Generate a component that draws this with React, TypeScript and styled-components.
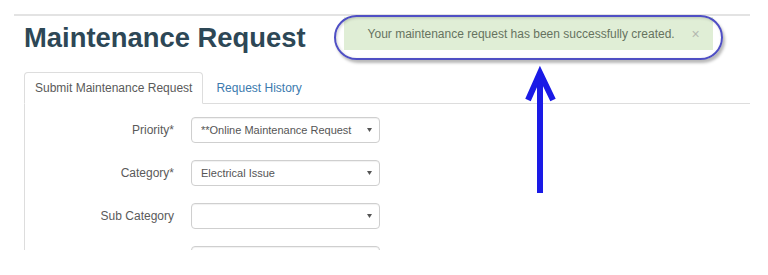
import styled, { createGlobalStyle } from "styled-components";

const GlobalStyle = createGlobalStyle`
  html, body {
    margin: 0;
    padding: 0;
    background: #ffffff;
  }
  body {
    font-family: "Liberation Sans", Arial, sans-serif;
  }
`;

const Page = styled.div`
  box-sizing: border-box;
  width: 768px;
  height: 275px;
  padding: 14px 18px 0 14px;
  background: #ffffff;
  overflow: hidden;
`;

const Frame = styled.div`
  box-sizing: border-box;
  position: relative;
  width: 736px;
  padding-left: 10px;
  border-top: 2px solid #e3e3e3;
`;

const Header = styled.div`
  display: flex;
  flex-direction: row;
  align-items: flex-start;
  padding-top: 1px;
`;

const Title = styled.h1`
  margin: 5px 0 0 0;
  font-family: "Liberation Sans", Arial, sans-serif;
  font-size: 27.4px;
  line-height: 32px;
  font-weight: 700;
  color: #2d4756;
  white-space: nowrap;
`;

const AlertWrap = styled.div`
  position: relative;
  margin-left: 38px;
`;

const Alert = styled.div`
  box-sizing: border-box;
  display: flex;
  align-items: center;
  width: 369px;
  height: 33px;
  padding: 0 13px 0 24px;
  background: #e0eed6;
  color: #66735f;
  font-size: 12px;
  white-space: nowrap;
`;

const Close = styled.span`
  margin-left: auto;
  font-size: 14px;
  line-height: 1;
  color: #b3b8b0;
`;

const Oval = styled.div`
  position: absolute;
  left: -10px;
  right: -10px;
  top: -2px;
  bottom: -10px;
  border: 2.5px solid #4f4fc4;
  border-radius: 24px;
  box-shadow: 2px 3px 3px rgba(0, 0, 0, 0.28),
    inset 1px 1px 3px rgba(0, 0, 0, 0.18);
  pointer-events: none;
`;

const Arrow = styled.svg`
  position: absolute;
  left: 177px;
  top: 48px;
  overflow: visible;
`;

const Tabs = styled.div`
  display: flex;
  flex-direction: row;
  margin-top: 18px;
  height: 31px;
  border-bottom: 1px solid #dddddd;
`;

const Tab = styled.div<{ $active?: boolean }>`
  box-sizing: border-box;
  display: flex;
  align-items: center;
  height: 32px;
  padding: ${({ $active }) => ($active ? "0 10px" : "0 12px")};
  margin-bottom: -1px;
  font-size: 12px;
  white-space: nowrap;
  border: 1px solid ${({ $active }) => ($active ? "#dddddd" : "transparent")};
  border-bottom-color: transparent;
  border-radius: 4px 4px 0 0;
  background: ${({ $active }) => ($active ? "#ffffff" : "transparent")};
  color: ${({ $active }) => ($active ? "#5a5a5a" : "#3b7aae")};
`;

const Panel = styled.div`
  box-sizing: border-box;
  height: 146px;
  padding-top: 13px;
  border-left: 1px solid #dddddd;
  overflow: hidden;
  display: flex;
  flex-direction: column;
  gap: 17px;
`;

const Row = styled.div`
  display: grid;
  grid-template-columns: 149px 189px;
  column-gap: 17px;
  align-items: center;
`;

const Label = styled.label`
  text-align: right;
  font-size: 12px;
  color: #5a5a5a;
  white-space: nowrap;
`;

const SelectBox = styled.div`
  box-sizing: border-box;
  display: flex;
  align-items: center;
  height: 26px;
  padding: 0 7px 0 9px;
  border: 1px solid #cfcfcf;
  border-radius: 4px;
  box-shadow: inset 0 1px 1px rgba(0, 0, 0, 0.06);
  background: #ffffff;
  font-size: 11px;
  color: #555555;
  white-space: nowrap;
`;

const SelectValue = styled.span`
  flex: 1;
  overflow: hidden;
`;

const Caret = () => (
  <svg width="5" height="4" viewBox="0 0 5 4">
    <path d="M0 0 L5 0 L2.5 4 Z" fill="#555555" />
  </svg>
);

const Select = ({ value }: { value?: string }) => (
  <SelectBox>
    <SelectValue>{value}</SelectValue>
    <Caret />
  </SelectBox>
);

const fields = [
  { label: "Priority*", value: "**Online Maintenance Request" },
  { label: "Category*", value: "Electrical Issue" },
  { label: "Sub Category", value: "" },
  { label: "", value: "" },
];

export default function App() {
  return (
    <>
      <GlobalStyle />
      <Page>
        <Frame>
          <Header>
            <Title>Maintenance Request</Title>
            <AlertWrap>
              <Alert>
                Your maintenance request has been successfully created.
                <Close>×</Close>
              </Alert>
              <Oval />
              <Arrow width="40" height="135" viewBox="0 0 40 135">
                <path
                  d="M19 128 L19 8"
                  stroke="#1a1ae6"
                  strokeWidth="6"
                  fill="none"
                />
                <path
                  d="M7 35 L19 8 L32 35"
                  stroke="#1a1ae6"
                  strokeWidth="6"
                  fill="none"
                  strokeLinejoin="miter"
                />
              </Arrow>
            </AlertWrap>
          </Header>
          <Tabs>
            <Tab $active>Submit Maintenance Request</Tab>
            <Tab>Request History</Tab>
          </Tabs>
          <Panel>
            {fields.map((f, i) => (
              <Row key={i}>
                <Label>{f.label}</Label>
                <Select value={f.value} />
              </Row>
            ))}
          </Panel>
        </Frame>
      </Page>
    </>
  );
}
